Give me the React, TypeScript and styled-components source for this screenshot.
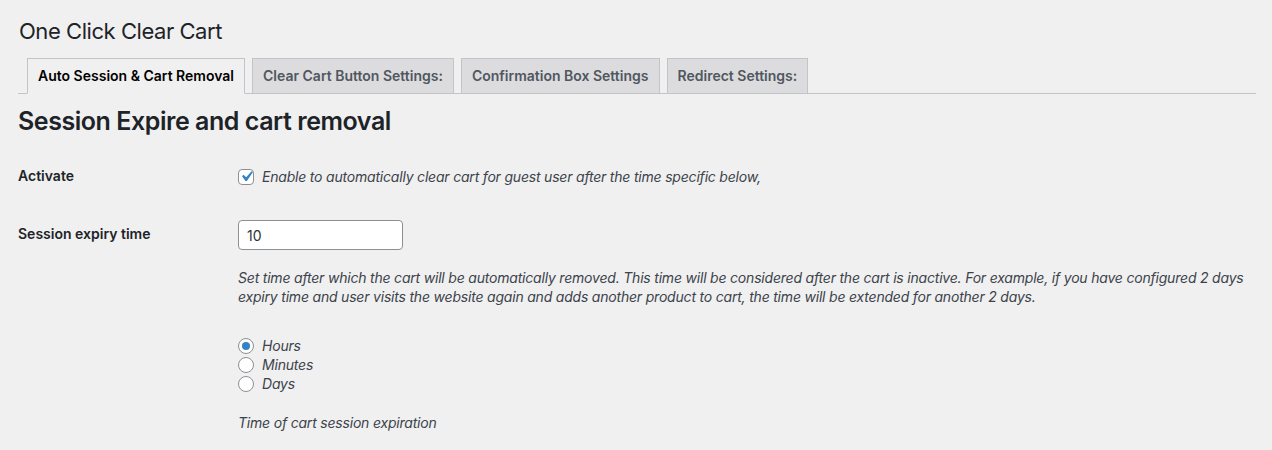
import React, { useState } from 'react';
import styled, { createGlobalStyle } from 'styled-components';

const GlobalStyle = createGlobalStyle`
  html, body {
    margin: 0;
    padding: 0;
    background: #f0f0f1;
  }
  body {
    font-family: Inter, "Noto Sans", "Liberation Sans", sans-serif;
    font-size: 14px;
    color: #3c434a;
  }
`;

const Wrap = styled.div`
  margin: 0 16px 0 18px;
`;

const PageTitle = styled.h1`
  margin: 0;
  padding: 16px 0 0 1px;
  font-size: 22px;
  font-weight: 400;
  letter-spacing: -0.45px;
  line-height: 30px;
  color: #1d2327;
`;

const TabBar = styled.nav`
  display: flex;
  margin-top: 12px;
  padding-left: 9px;
  gap: 7px;
  border-bottom: 1px solid #c3c4c7;
`;

interface ITabProps {
  active?: boolean;
}

const Tab = styled.a<ITabProps>`
  display: block;
  margin-bottom: -1px;
  padding: 5px 10px;
  border: 1px solid #c3c4c7;
  border-bottom-color: ${(props) => (props.active ? '#f0f0f1' : '#c3c4c7')};
  background: ${(props) => (props.active ? '#f0f0f1' : '#dcdcde')};
  color: ${(props) => (props.active ? '#000' : '#50575e')};
  font-size: 14px;
  font-weight: 600;
  line-height: 24px;
  text-decoration: none;
  white-space: nowrap;
  cursor: pointer;
`;

const SectionTitle = styled.h2`
  margin: 10px 0 9px;
  font-size: 25px;
  font-weight: 600;
  letter-spacing: -0.45px;
  line-height: 34px;
  color: #1d2327;
`;

const FormRow = styled.div`
  display: grid;
  grid-template-columns: 210px 1fr;
`;

const RowLabel = styled.div`
  padding: 20px 0;
  font-weight: 600;
  line-height: 18px;
  color: #1d2327;
`;

const RowField = styled.div<{ top: number }>`
  padding: ${(props) => props.top}px 10px 15px 10px;
`;

const CheckLabel = styled.label`
  display: flex;
  align-items: center;
  gap: 8px;
  font-style: italic;
  letter-spacing: -0.2px;
  line-height: 19px;
  color: #3c434a;
  cursor: pointer;
`;

const CheckBox = styled.span`
  display: flex;
  align-items: center;
  justify-content: center;
  box-sizing: border-box;
  width: 16px;
  height: 16px;
  border: 1px solid #8c8f94;
  border-radius: 4px;
  background: #fff;
  flex: none;

  svg {
    flex: none;
    margin-top: -1px;
  }
`;

const TextInput = styled.input`
  box-sizing: border-box;
  width: 165px;
  height: 30px;
  margin: 0;
  padding: 0 8px;
  border: 1px solid #8c8f94;
  border-radius: 4px;
  background: #fff;
  font-family: inherit;
  font-size: 14px;
  color: #2c3338;
  outline: none;
`;

const Description = styled.p<{ gap: number }>`
  margin: ${(props) => props.gap}px 0 0;
  font-style: italic;
  letter-spacing: -0.2px;
  line-height: 19px;
  color: #3c434a;
`;

const RadioList = styled.div`
  margin-top: 30px;
  display: flex;
  flex-direction: column;
`;

const RadioLabel = styled.label`
  display: flex;
  align-items: center;
  gap: 8px;
  font-style: italic;
  letter-spacing: -0.2px;
  line-height: 19px;
  color: #3c434a;
  cursor: pointer;
`;

const RadioCircle = styled.span<{ checked: boolean }>`
  display: flex;
  align-items: center;
  justify-content: center;
  box-sizing: border-box;
  width: 16px;
  height: 16px;
  border: 1px solid #8c8f94;
  border-radius: 50%;
  background: #fff;
  flex: none;

  &::after {
    content: '';
    width: 8px;
    height: 8px;
    border-radius: 50%;
    background: #3582c4;
    display: ${(props) => (props.checked ? 'block' : 'none')};
  }
`;

const tabs = [
  'Auto Session & Cart Removal',
  'Clear Cart Button Settings:',
  'Confirmation Box Settings',
  'Redirect Settings:',
];

const units = ['Hours', 'Minutes', 'Days'];

export default function App() {
  const [activeTab, setActiveTab] = useState(0);
  const [enabled, setEnabled] = useState(true);
  const [unit, setUnit] = useState('Hours');
  const [expiry, setExpiry] = useState('10');

  return (
    <>
      <GlobalStyle />
      <Wrap>
        <PageTitle>One Click Clear Cart</PageTitle>
        <TabBar>
          {tabs.map((t, i) => (
            <Tab key={t} active={i === activeTab} onClick={() => setActiveTab(i)}>
              {t}
            </Tab>
          ))}
        </TabBar>
        <SectionTitle>Session Expire and cart removal</SectionTitle>

        <FormRow>
          <RowLabel>Activate</RowLabel>
          <RowField top={20}>
            <CheckLabel onClick={() => setEnabled(!enabled)}>
              <CheckBox>
                {enabled && (
                  <svg width="21" height="21" viewBox="0 0 20 20">
                    <path
                      d="M14.83 4.89l1.34.94-5.81 8.38H9.02L5.78 9.670l1.34-1.25 2.57 2.4z"
                      fill="#3582c4"
                    />
                  </svg>
                )}
              </CheckBox>
              Enable to automatically clear cart for guest user after the time specific below,
            </CheckLabel>
          </RowField>
        </FormRow>

        <FormRow>
          <RowLabel>Session expiry time</RowLabel>
          <RowField top={15}>
            <TextInput value={expiry} onChange={(e) => setExpiry(e.target.value)} />
            <Description gap={18}>
              Set time after which the cart will be automatically removed. This time will be considered
              after the cart is inactive. For example, if you have configured 2 days expiry time and user
              visits the website again and adds another product to cart, the time will be extended for
              another 2 days.
            </Description>
            <RadioList>
              {units.map((u) => (
                <RadioLabel key={u} onClick={() => setUnit(u)}>
                  <RadioCircle checked={unit === u} />
                  {u}
                </RadioLabel>
              ))}
            </RadioList>
            <Description gap={20}>Time of cart session expiration</Description>
          </RowField>
        </FormRow>
      </Wrap>
    </>
  );
}
